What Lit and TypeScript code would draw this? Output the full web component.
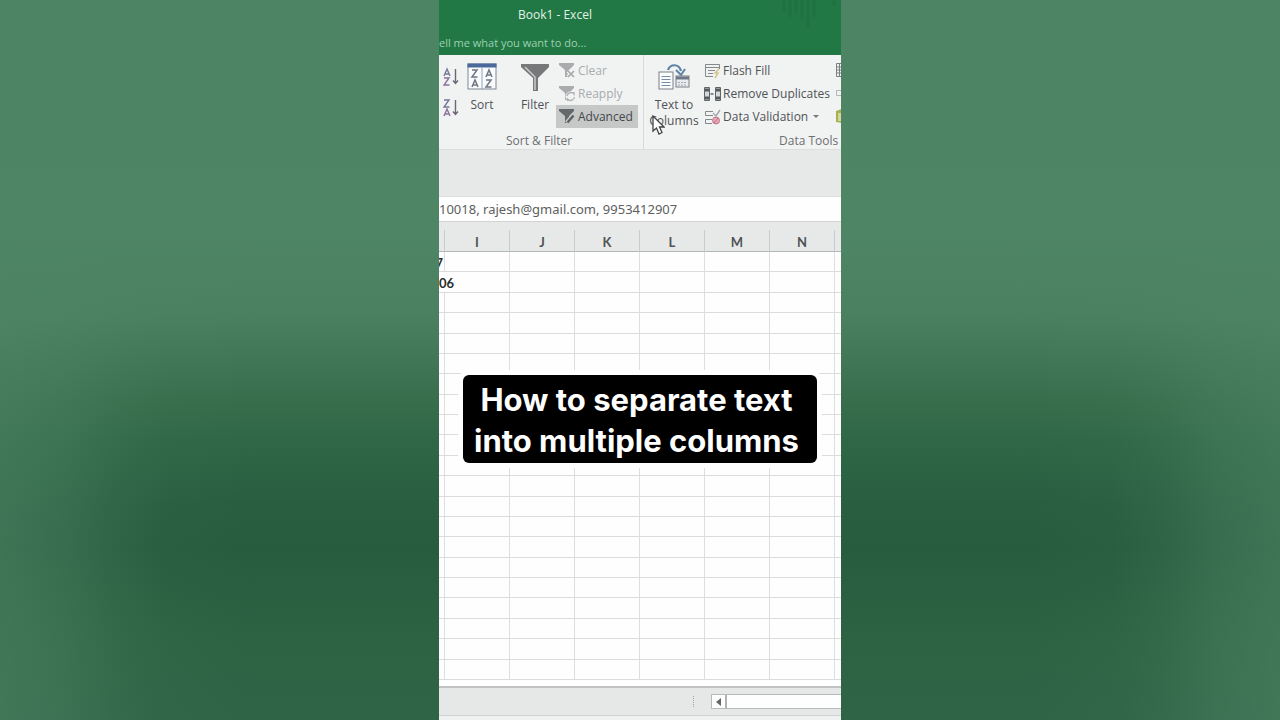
import { LitElement, html, css, svg } from "lit";
import { customElement } from "lit/decorators.js";

const COLUMNS = ["I", "J", "K", "L", "M", "N"];
const ROWS = Array.from({ length: 21 }, (_, i) => i);

const letterA = (x: number, y: number) => svg`<path d="M${x} ${y + 7}l3-7 3 7M${x + 1} ${y + 5}h4"/>`;
const letterZ = (x: number, y: number) => svg`<path d="M${x} ${y}h5l-5 7h5.500"/>`;

const azIcon = (reverse: boolean) => html`<svg width="16" height="20" viewBox="0 0 16 20" fill="none" stroke-width="1.4">
  <g stroke="#77799c">${reverse ? letterZ(1, 2) : letterA(1, 2)}</g>
  <g stroke="#8a739c">${reverse ? letterA(1, 11) : letterZ(1, 11)}</g>
  <path d="M12.500 2v14M10 13.500l2.500 3 2.500-3" stroke="#6d6878"/>
</svg>`;

const sortIcon = html`<svg width="30" height="27" viewBox="0 0 30 27" fill="none">
  <rect x="1" y="1" width="28" height="25" fill="#fafbfd" stroke="#7e8794"/>
  <path d="M.5.500h29v4H.5z" fill="#4b6a9b"/>
  <path d="M15 5v21" stroke="#8fa1b8"/>
  <g stroke="#6f7684" stroke-width="1.500">${letterZ(5, 7)}${letterA(19, 7)}${letterA(5, 17)}${letterZ(19, 17)}</g>
</svg>`;

const filterIcon = html`<svg width="30" height="29" viewBox="0 0 30 29">
  <path d="M1 1h28v3L18 15v13h-5V15L1 4z" fill="#777879"/>
  <path d="M5 4l10 10v13" fill="none" stroke="#c9cacb" stroke-width="1.500"/>
</svg>`;

const funnel = svg`<path d="M0 1h15v2L10 8v7H6V8L0 3z"/>`;
const clearIcon = html`<svg width="17" height="17" viewBox="0 0 17 17" fill="#a9abad">
  ${funnel}<path d="M9 9l6 6M15 9l-6 6" stroke="#f1f3f3" stroke-width="4"/><path d="M9 9l6 6M15 9l-6 6" stroke="#a4a6a8" stroke-width="1.600"/>
</svg>`;
const reapplyIcon = html`<svg width="17" height="17" viewBox="0 0 17 17" fill="#a9abad">
  ${funnel}<circle cx="11.500" cy="11.500" r="5" fill="#f1f3f3"/>
  <path d="M8 11a4 4 0 0 1 7-2V7M15.500 12a4 4 0 0 1-7 2v2" fill="none" stroke="#b0b2b4" stroke-width="1.400"/>
</svg>`;
const advancedIcon = html`<svg width="17" height="17" viewBox="0 0 17 17" fill="#65686b">
  ${funnel}<path d="M8 15l7-8" stroke="#c6c7c8" stroke-width="5"/><path d="M8.500 14.500l6-7" stroke="#5d6063" stroke-width="2.400"/>
</svg>`;

const textColumnsIcon = html`<svg width="32" height="28" viewBox="0 0 32 28" fill="none">
  <path d="M10 7C12 1 21 0 23 8" stroke="#5f82a8" stroke-width="2.200"/>
  <path d="M18 7l5 5 4-6" stroke="#5f82a8" stroke-width="2"/>
  <rect x="1" y="9" width="14" height="17" fill="#fafbfb" stroke="#7d8084"/>
  <path d="M3.500 13.500h9M3.500 16.500h9M3.500 19.500h9M3.500 22.500h9" stroke="#7b8ba3"/>
  <rect x="18" y="13" width="13" height="11" fill="#e9edf1" stroke="#7d8084"/>
  <path d="M18 15h13" stroke="#6c7889" stroke-width="3"/>
  <path d="M20 19.500h9M20 22h9" stroke="#a3a8ad" stroke-dasharray="2 1"/>
</svg>`;

const flashIcon = html`<svg width="17" height="16" viewBox="0 0 17 16" fill="none">
  <path d="M15.500 6V1.500h-14v12H9M1.500 4.500h14M4 7.500h7M4 10.500h5" stroke="#85898d"/>
  <path d="M15 6l-4 4h3l-3 5" stroke="#d3c58f" stroke-width="1.600"/>
</svg>`;
const duplicatesIcon = html`<svg width="17" height="16" viewBox="0 0 17 16" fill="none">
  <path d="M.5 1.500h5v13h-5zM11.500 1.500h5v13h-5z" fill="#d5d8da" stroke="#606468"/>
  <path d="M1 4h4M1 12h4M12 4h4M12 12h4" stroke="#565a5e" stroke-width="3"/>
  <path d="M6.500 8h4" stroke="#5c6570" stroke-width="1.500" stroke-dasharray="3 1"/>
</svg>`;
const validationIcon = html`<svg width="17" height="16" viewBox="0 0 17 16" fill="none">
  <path d="M9 2.500H1.500v4H9M8 10.500H1.500v4H8" stroke="#85888c"/>
  <path d="M9 4l3 3 4-6" stroke="#a4a5aa" stroke-width="1.400"/>
  <circle cx="12" cy="11.500" r="3.500" fill="#e4a9b6" stroke="#c5728a"/>
  <path d="M10 14l4-5" stroke="#c5728a"/>
</svg>`;

@customElement("app-root")
export class AppRoot extends LitElement {
  static styles = css`
    :host {
      display: block;
      font-family: "Open Sans", "Noto Sans", sans-serif;
      color: #4f5254;
    }
    * { box-sizing: border-box; }
    button {
      font: inherit;
      color: inherit;
      background: none;
      border: 0;
      padding: 0;
      margin: 0;
      white-space: nowrap;
    }
    svg { display: block; flex: none; }
    .stage {
      min-height: 100vh;
      display: flex;
      justify-content: center;
      overflow: hidden;
      background:
        linear-gradient(to right,
          rgba(78, 133, 101, 0.58) 0%, rgba(78, 133, 101, 0.42) 5%, rgba(78, 133, 101, 0.2) 9%,
          rgba(78, 133, 101, 0.06) 13%, rgba(78, 133, 101, 0) 19%, rgba(78, 133, 101, 0) 81%,
          rgba(78, 133, 101, 0.06) 87%, rgba(78, 133, 101, 0.2) 91%, rgba(78, 133, 101, 0.42) 95%,
          rgba(78, 133, 101, 0.58) 100%),
        linear-gradient(to bottom, #4d8464 0%, #4e8565 33%, #4a8060 44%, #3f7555 51%, #376d4b 56%,
          #2d6545 63%, #295f40 70%, #275d3e 76%, #2d6343 89%, #2f6546 100%);
    }
    .video {
      position: relative;
      flex: 0 1 402px;
      min-width: 0;
      display: flex;
      flex-direction: column;
      overflow: hidden;
      background: #fefefe;
    }
    .titlebar {
      height: 55px;
      flex: none;
      display: flex;
      flex-direction: column;
      background: #217844;
      color: #e2f2e7;
      position: relative;
    }
    .title { margin: 0; padding: 7px 0 0 79px; font-size: 12px; line-height: 16px; font-weight: 400; }
    .tell { padding-top: 12px; font-size: 11px; line-height: 16px; color: #9fd0b0; text-align: left; }
    .ornament { position: absolute; right: 0; top: 0; }
    .ribbon {
      height: 95px;
      flex: none;
      display: flex;
      background: #f1f3f3;
      border-bottom: 1px solid #dcdddd;
      font-size: 12px;
      line-height: 16px;
      overflow: hidden;
    }
    .group { display: flex; flex-direction: column; padding-top: 4px; }
    .sorting { flex: 0 0 204px; }
    .tools { flex: 1; min-width: 0; border-left: 1px solid #d8dada; }
    .controls { display: flex; height: 74px; }
    .controls > * { flex: none; }
    .label { line-height: 16px; color: #6c6f70; white-space: nowrap; }
    .sorting .label { padding-left: 67px; }
    .tools .label { padding-left: 135px; }
    .order { display: flex; flex-direction: column; gap: 11px; padding: 8px 0 0 4px; width: 24px; }
    .big { display: flex; flex-direction: column; align-items: center; padding-top: 4px; height: 72px; }
    .big .pic { height: 34px; }
    .sort { width: 38px; }
    .filter { width: 42px; margin-left: 13px; }
    .columns { width: 58px; margin-left: 1px; }
    .stack { display: flex; flex-direction: column; }
    .small { height: 23px; display: flex; align-items: center; gap: 2px; padding: 0 5px 0 3px; }
    .off { color: #a8abac; }
    .active { background: #c6c8c8; color: #444749; }
    .tools .small { padding: 0 0 0 1px; }
    .caret { width: 0; border: 3px solid transparent; border-top-color: #77797b; border-bottom: 0; margin-left: 3px; }
    .cut { display: flex; flex-direction: column; gap: 9px; padding: 4px 0 0 5px; }
    .band { height: 47px; flex: none; background: #e7e9e9; border-bottom: 1px solid #dcdede; }
    .formula {
      height: 24px;
      flex: none;
      width: 100%;
      border: 0;
      padding: 0;
      background: #fefefe;
      color: #5d5f60;
      font-family: "Noto Sans", sans-serif;
      font-size: 13px;
    }
    .gap { height: 9px; flex: none; background: #e7e9e9; border-top: 1px solid #d2d4d4; }
    .sheet {
      width: 100%;
      height: 450px;
      flex: 1 0 auto;
      table-layout: fixed;
      border-collapse: separate;
      border-spacing: 0;
    }
    .edge { width: 6px; }
    .col { width: 65px; }
    th {
      height: 22px;
      padding: 2px 0 0;
      background: #e7e9e9;
      border-right: 1px solid #c9cccc;
      border-bottom: 1px solid #b3b7b7;
      font-family: Lato, sans-serif;
      font-size: 13px;
      line-height: 16px;
      font-weight: 700;
      color: #505354;
    }
    td {
      height: 20px;
      padding: 2px 0 0;
      border-right: 1px solid #dfdede;
      border-bottom: 1px solid #dddcdc;
      font-family: Lato, sans-serif;
      font-size: 13px;
      line-height: 16px;
      font-weight: 700;
      color: #2c2c2c;
      white-space: nowrap;
    }
    th:last-child, td:last-child { border-right: 0; }
    .tail { direction: rtl; padding-right: 2px; }
    .footer {
      margin-top: 6px;
      height: 30px;
      flex: none;
      display: flex;
      align-items: center;
      background: #e6e8e8;
      border-top: 2px solid #c0c2c2;
      border-bottom: 1px solid #d0d3d3;
      padding-left: 254px;
    }
    .grip { width: 2px; height: 11px; border-left: 1px dotted #a2a4a4; margin-right: 16px; }
    .scroll { flex: 1; display: flex; height: 15px; border: 1px solid #b7b9b9; border-right: 0; background: #fefefe; }
    .back { width: 15px; height: 13px; display: flex; align-items: center; justify-content: center; border-right: 2px solid #b0b2b2; }
    .status { height: 4px; flex: none; background: #eef1f0; }
    .caption {
      position: absolute;
      left: 24px;
      right: 24px;
      top: 375px;
      margin: 0;
      padding: 4px 18px 2px 11px;
      border-radius: 6px;
      background: #000;
      box-shadow: 0 0 0 5px #fefefe;
      color: #fff;
      font-family: Inter, sans-serif;
      font-size: 31px;
      line-height: 41px;
      font-weight: 700;
      text-align: center;
      white-space: nowrap;
    }
    .pointer { position: absolute; left: 213px; top: 115px; }
  `;

  render() {
    return html`<main class="stage">
      <section class="video">
        <header class="titlebar">
          <h1 class="title">Book1 - Excel</h1>
          <button class="tell">ell me what you want to do...</button>
          <svg class="ornament" width="60" height="28" viewBox="0 0 60 28" stroke="#1c693b" stroke-width="3">
            <path d="M3 0v13M9 0v17M15 0v13M21 0v20M27 0v27M33 0v17M53 0v6" opacity=".4"/>
          </svg>
        </header>
        <div class="ribbon">
          <div class="group sorting">
            <div class="controls">
              <div class="order">
                <button aria-label="Sort A to Z">${azIcon(false)}</button>
                <button aria-label="Sort Z to A">${azIcon(true)}</button>
              </div>
              <button class="big sort"><span class="pic">${sortIcon}</span>Sort</button>
              <button class="big filter"><span class="pic">${filterIcon}</span>Filter</button>
              <div class="stack">
                <button class="small off">${clearIcon}Clear</button>
                <button class="small off">${reapplyIcon}Reapply</button>
                <button class="small active">${advancedIcon}Advanced</button>
              </div>
            </div>
            <div class="label">Sort &amp; Filter</div>
          </div>
          <div class="group tools">
            <div class="controls">
              <button class="big columns"><span class="pic">${textColumnsIcon}</span><span>Text to<br>Columns</span></button>
              <div class="stack">
                <button class="small">${flashIcon}Flash Fill</button>
                <button class="small">${duplicatesIcon}Remove Duplicates</button>
                <button class="small">${validationIcon}Data Validation<span class="caret"></span></button>
              </div>
              <div class="cut">
                <svg width="14" height="14" viewBox="0 0 14 14" fill="none" stroke="#7c7f82"><path d="M1.500.500h12v13h-12zM1 4h12M1 7h12M1 10h12M4.500 1v12"/></svg>
                <svg width="14" height="14" viewBox="0 0 14 14" fill="none" stroke="#b5b7b9"><path d="M1.500 4.500h6v5h-6z"/></svg>
                <svg width="14" height="14" viewBox="0 0 14 14"><path d="M1 2l6-2v14l-6-1z" fill="#a5b04e"/><path d="M3 4h8v8H3z" fill="#d7d59a"/></svg>
              </div>
            </div>
            <div class="label">Data Tools</div>
          </div>
        </div>
        <div class="band"></div>
        <input class="formula" aria-label="Formula bar" .value=${"10018, rajesh@gmail.com, 9953412907"}>
        <div class="gap"></div>
        <table class="sheet">
          <colgroup><col class="edge">${COLUMNS.map(() => html`<col class="col">`)}<col></colgroup>
          <thead><tr><th></th>${COLUMNS.map((c) => html`<th scope="col">${c}</th>`)}<th></th></tr></thead>
          <tbody>${ROWS.map((r) => html`<tr>
            ${r === 1
              ? html`<td colspan="2">06</td>${COLUMNS.slice(1).map(() => html`<td></td>`)}<td></td>`
              : html`<td class="tail">${r === 0 ? "7" : ""}</td>${COLUMNS.map(() => html`<td></td>`)}<td></td>`}
          </tr>`)}</tbody>
        </table>
        <footer class="footer">
          <span class="grip"></span>
          <div class="scroll">
            <button class="back" aria-label="Scroll left"><svg width="5" height="8" viewBox="0 0 5 8"><path d="M5 0v8L0 4z" fill="#626465"/></svg></button>
          </div>
        </footer>
        <div class="status"></div>
        <h2 class="caption">How to separate text<br>into multiple columns</h2>
        <svg class="pointer" width="13" height="20" viewBox="0 0 13 20"><path d="M1 1v15l3.500-3 2.500 6 3-1.500-2.500-5.500H12z" fill="#fff" stroke="#414345" stroke-width="1.300"/></svg>
      </section>
    </main>`;
  }
}
